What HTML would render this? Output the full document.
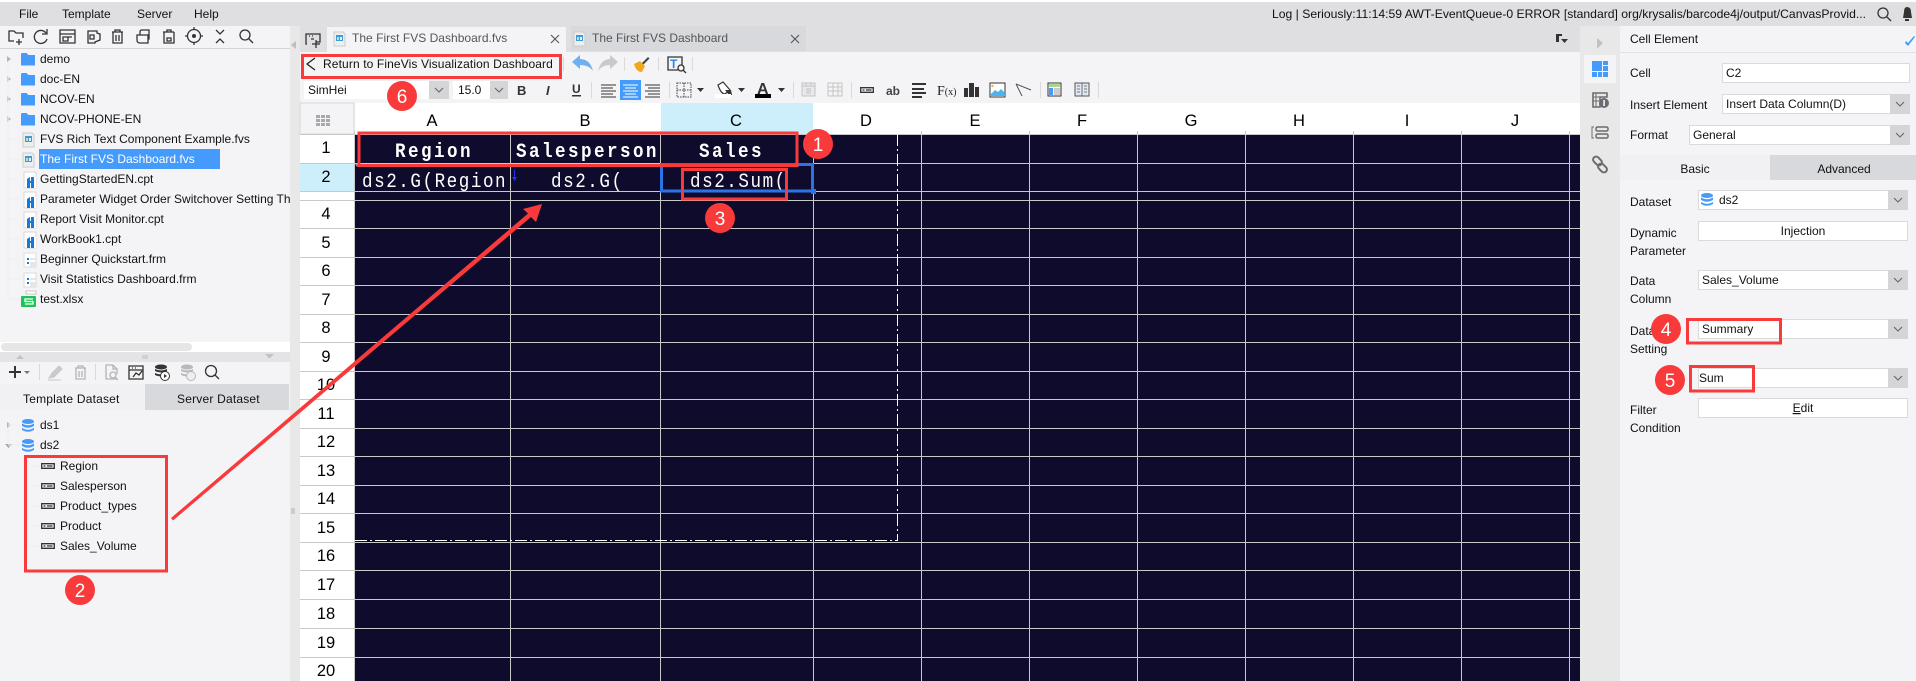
<!DOCTYPE html>
<html><head><meta charset="utf-8"><title>FineReport</title>
<style>
html,body{margin:0;padding:0;background:#fff;width:1916px;height:681px;overflow:hidden}
svg{display:block}
text{font-family:"Liberation Sans","Noto Sans CJK SC",sans-serif;font-size:12px;fill:#111}
.h{font-size:16.500px;fill:#000;text-anchor:middle}
.m{font-family:"Liberation Mono",monospace;font-size:20px;fill:#fff;letter-spacing:1.750px}
.b{font-family:"Liberation Mono",monospace;font-size:20px;fill:#fff;font-weight:bold;letter-spacing:2.770px}
.c{font-size:19px;fill:#fff;text-anchor:middle}
.g{fill:#555}
.s{fill:none;stroke:#333;stroke-width:1.3}
.l{fill:none;stroke:#b4b4b4;stroke-width:1.3}
.sep{fill:#d9d9db}
.car{fill:#333}
.box{fill:none;stroke:#f93a3a;stroke-width:3}
</style></head><body>
<svg width="1916" height="681" viewBox="0 0 1916 681" xmlns="http://www.w3.org/2000/svg">
<defs>
<g id="folder"><path d="M0 1.5q0-1.500 1.500-1.500h4l2 2h6.500v10.500h-14z" fill="#459bfb"/></g>
<g id="fvs"><path d="M0 0h9l2 2v12H0z" fill="#eceef0" stroke="#ccc"/><rect x="2" y="3" width="7" height="6" fill="#3f9bd8"/><rect x="3" y="5" width="2" height="3" fill="#bfe3b0"/><rect x="6" y="5" width="2" height="3" fill="#e8f3ff"/></g>
<g id="cpt"><path d="M0 0h12v16H0z" fill="#fff" stroke="#cfcfcf" stroke-width=".8"/><path d="M2.500 5h9.500v11H2.500z" fill="#fff"/><path d="M3 7l3-2v11H3zM7 5h3v11H7V11H6V9h1z" fill="#1878d8"/></g>
<g id="frm"><path d="M0 0h12v14H0z" fill="#fff" stroke="#d5d5d5" stroke-width=".8"/><rect x="3" y="5" width="2" height="2" fill="#1878d8"/><rect x="3" y="9" width="2" height="2" fill="#1878d8"/><rect x="6" y="5" width="7" height="2" fill="#e6e6e6"/><rect x="6" y="9" width="7" height="5" fill="#e6e6e6"/></g>
<g id="db"><ellipse cx="6" cy="2.500" rx="6" ry="2.500" fill="#459bfb"/><path d="M0 4.500q6 3.500 12 0v2.500q-6 3.500-12 0zM0 9q6 3.500 12 0v2q-6 3.500-12 0z" fill="#459bfb"/></g>
<g id="field"><path d="M.7.700h12.600v4.600H.7z" fill="none" stroke="#333" stroke-width="1.300"/><path d="M2.500 3h2M6 3h5.500" stroke="#333" stroke-width="1.200"/></g>
<g id="ch"><path d="M-4-2L0 2L4-2" fill="none" stroke="#666" stroke-width="1.100"/></g>
<clipPath id="cl1"><rect x="38" y="185" width="252" height="30"/></clipPath>
<clipPath id="cl2"><rect x="300" y="131" width="1280" height="550"/></clipPath>
</defs>

<!-- backgrounds -->
<rect width="1916" height="681" fill="#f4f4f6"/>
<rect width="1916" height="2" fill="#fff"/>
<rect y="2" width="1916" height="24" fill="#dfdfe1"/>
<rect x="0" y="26" width="290" height="655" fill="#f4f4f6"/>
<rect x="290" y="26" width="10" height="655" fill="#e8e8e8"/>
<rect x="300" y="26" width="1280" height="26" fill="#dfdfe1"/>
<rect x="300" y="52" width="1280" height="51" fill="#f4f4f6"/>
<rect x="1580" y="26" width="40" height="655" fill="#e8e8e8"/>
<path d="M296 41l-5 4 5 4z" fill="#bdbdbd"/>
<path d="M292 508v6M294 508v6" stroke="#b0b0b0"/>

<!-- menu -->
<text x="19" y="18">File</text><text x="62" y="18">Template</text><text x="137" y="18">Server</text><text x="194" y="18">Help</text>
<text x="1866" y="18" text-anchor="end" textLength="594" lengthAdjust="spacingAndGlyphs">Log | Seriously:11:14:59 AWT-EventQueue-0 ERROR [standard] org/krysalis/barcode4j/output/CanvasProvid...</text>
<circle cx="1883" cy="13" r="5" class="s"/><path d="M1887 17l4 4" class="s"/>
<path d="M1907 7q-3 0-3 5l-1 6h9l-1-6q0-5-4-5zM1905 19h4v2h-4z" fill="#333"/>

<!-- left toolbar -->
<rect y="48" width="290" height="1" fill="#d4d4d6"/>
<g class="s">
<path d="M14 41H9V31h5l2 2h7v5M19 39v6M16 42h6"/>
<path d="M46 33a6.500 6.500 0 1 0 1 6M47 29v5h-5"/>
<path d="M60 30h15v13H60zM60 34h15M63 37h5v4h-5zM68 37h4"/>
<path d="M88 31h9v2l3 1v6l-5 2v1h-7zM90 35h4v4h-4z"/>
<path d="M112 32h11M115 32v-2h5v2M113 32v11h9V32M116 35v6M119 35v6"/>
<path d="M137 35h11v8h-8q-3 0-3-3zM140 35v-3q0-2 2-2h7v9h-1"/>
<path d="M163 32h11M167 32v-2h4v2M164 32v11h10V32M167 38h4v3h-4z"/>
<circle cx="194" cy="36" r="6.500"/>
<path d="M216 30l4 4 4-4M216 43l4-4 4 4"/>
<circle cx="245" cy="35" r="5"/><path d="M249 39l4 4"/>
</g>
<circle cx="194" cy="36" r="2" fill="#333"/>
<path d="M194 27v3M194 42v3M185 36h3M200 36h3" class="s"/>

<!-- tree 1 -->
<path d="M7 56l4 3-4 3zM7 76l4 3-4 3zM7 96l4 3-4 3zM7 116l4 3-4 3z" fill="#b5b5b5"/>
<path d="M8 139h12M8 159h12M8 179h12M8 199h12M8 219h12M8 239h12M8 259h12M8 279h12M8 299h12M8 62v237" stroke="#eeeef0" fill="none"/>
<use href="#folder" x="21" y="53"/><use href="#folder" x="21" y="73"/><use href="#folder" x="21" y="93"/><use href="#folder" x="21" y="113"/>
<use href="#fvs" x="23" y="133"/><use href="#fvs" x="23" y="153"/>
<use href="#cpt" x="24" y="172"/><use href="#cpt" x="24" y="192"/><use href="#cpt" x="24" y="212"/><use href="#cpt" x="24" y="232"/>
<use href="#frm" x="24" y="253"/><use href="#frm" x="24" y="273"/>
<path d="M26 291h10v3H26z" fill="#fff" stroke="#bbb" stroke-width=".8"/>
<rect x="21" y="296" width="15" height="11" rx="1" fill="#1fc25a"/><path d="M33 299h-8v2.500h8v2.500h-8" stroke="#fff" stroke-width="1.300" fill="none"/>
<rect x="39" y="149" width="181" height="20" fill="#459bfb"/>
<text x="40" y="63">demo</text><text x="40" y="83">doc-EN</text><text x="40" y="103">NCOV-EN</text><text x="40" y="123">NCOV-PHONE-EN</text>
<text x="40" y="143">FVS Rich Text Component Example.fvs</text>
<text x="40" y="163" style="fill:#fff">The First FVS Dashboard.fvs</text>
<text x="40" y="183">GettingStartedEN.cpt</text>
<text x="40" y="203" clip-path="url(#cl1)">Parameter Widget Order Switchover Setting Three.cpt</text>
<text x="40" y="223">Report Visit Monitor.cpt</text>
<text x="40" y="243">WorkBook1.cpt</text>
<text x="40" y="263">Beginner Quickstart.frm</text>
<text x="40" y="283">Visit Statistics Dashboard.frm</text>
<text x="40" y="303">test.xlsx</text>

<!-- scrollbar & divider -->
<rect x="0" y="342" width="290" height="10" fill="#fff"/>
<rect x="1" y="343" width="191" height="8" rx="4" fill="#e6e6e6"/>
<rect x="0" y="352" width="290" height="10" fill="#e4e4e6"/>
<path d="M16 359l4-4 4 4zM265 354h9l-4.500 4.500z" fill="#c2c2c2"/>
<path d="M142 356h6M142 358h6" stroke="#bbb"/>

<!-- lower toolbar -->
<path d="M9 372h12M15 366v12" stroke="#333" stroke-width="2" fill="none"/>
<path d="M24 371h6l-3 3z" fill="#777"/>
<rect x="39" y="364" width="1" height="16" class="sep"/><rect x="95" y="364" width="1" height="16" class="sep"/>
<path d="M49 378l3-5 7-7 3 3-8 8zM48 380h13" fill="#c9c9c9" stroke="#c9c9c9"/>
<path class="l" d="M75 368h11M78 368v-2h5v2M76 368v11h9v-11M79 371v6M82 371v6"/>
<path class="l" d="M117 379h-11v-14h7l4 4v5M113 365v4h4"/><circle cx="113" cy="375" r="3" class="l"/><path class="l" d="M115 377l3 3"/>
<path class="s" d="M143 379h-14v-13h14zM129 370h14M132 368h1M135 368h1M133 377l3-4 3 2 3-4"/>
<ellipse cx="161" cy="367" rx="6" ry="2.500" fill="#333"/><path d="M155 369q6 3 12 0v2q-6 3-12 0zM155 373q6 3 12 0v2q-6 3-12 0z" fill="#333"/><circle cx="165" cy="376" r="4.500" fill="#fff" stroke="#333"/><path d="M164 374l3 2-3 2z" fill="#333"/>
<ellipse cx="187" cy="367" rx="6" ry="2.500" fill="#b8b8b8"/><path d="M181 369q6 3 12 0v2q-6 3-12 0zM181 373q6 3 12 0v2q-6 3-12 0z" fill="#b8b8b8"/><circle cx="191" cy="376" r="4.500" fill="#eee" stroke="#b8b8b8"/>
<circle cx="211" cy="371" r="5.500" class="s"/><path d="M215 375l4 4" class="s"/>

<!-- dataset tabs -->
<rect x="0" y="384" width="145" height="26" fill="#f1f1f3"/>
<rect x="145" y="384" width="144" height="26" fill="#d8d9dc"/>
<text x="23" y="403" style="letter-spacing:.2px">Template Dataset</text>
<text x="177" y="403" style="letter-spacing:.2px">Server Dataset</text>
<path d="M7 422l4 3-4 3z" fill="#b5b5b5"/><path d="M5 444h7l-3.500 4z" fill="#a5a5a5"/>
<path d="M8 428v15M8 425h12M8 445h12M28 451v96M28 466h12M28 486h12M28 506h12M28 526h12M28 546h12" stroke="#eeeef0" fill="none"/>
<use href="#db" x="22" y="419"/><use href="#db" x="22" y="439"/>
<text x="40" y="429">ds1</text><text x="40" y="449">ds2</text>
<use href="#field" x="41" y="463"/><use href="#field" x="41" y="483"/><use href="#field" x="41" y="503"/><use href="#field" x="41" y="523"/><use href="#field" x="41" y="543"/>
<text x="60" y="470">Region</text><text x="60" y="490">Salesperson</text><text x="60" y="510">Product_types</text><text x="60" y="530">Product</text><text x="60" y="550">Sales_Volume</text>

<!-- doc tabs -->
<rect x="327" y="27" width="239" height="25" fill="#f4f4f6"/>
<rect x="571" y="26" width="235" height="25" fill="#d8d9dc"/>
<path class="s" d="M307 44h-1V34h14v8h-4M311 39h3M309 36h1M312 36h1"/><path class="s" d="M316 40v8M312 44h8"/>
<use href="#fvs" x="334" y="32"/><use href="#fvs" x="574" y="32"/>
<text x="352" y="42" class="g" style="letter-spacing:.02px">The First FVS Dashboard.fvs</text>
<text x="592" y="42" class="g">The First FVS Dashboard</text>
<path d="M551 35l8 8M559 35l-8 8M791 35l8 8M799 35l-8 8" stroke="#555" stroke-width="1.100"/>
<path d="M1556 34h6v2h-3v6h-3zM1561 39h7l-3.500 4z" fill="#333"/>

<!-- toolbar row 1 -->
<path d="M315 58l-8 6 8 6" fill="none" stroke="#222" stroke-width="1.300"/>
<text x="323" y="68" style="letter-spacing:.12px">Return to FineVis Visualization Dashboard</text>
<rect x="563" y="57" width="1" height="14" class="sep"/><rect x="624" y="57" width="1" height="14" class="sep"/><rect x="658" y="57" width="1" height="14" class="sep"/><rect x="692" y="57" width="1" height="14" class="sep"/>
<path d="M572 62l8-7v4q10 0 13 12q-4-6-13-6v4z" fill="#6fb0f0"/>
<path d="M618 62l-8-7v4q-9 0-12 12q4-6 12-6v4z" fill="#c9c9c9"/>
<path d="M634 64l6-3 5 5-3 6q-6 0-8-8z" fill="#f2a81c"/><path d="M642 63l6-6 1.500 1.500-6 6z" fill="#444"/>
<path class="s" d="M678 70h-10V57h14v8"/><text x="670" y="68" style="font-size:12px;font-weight:bold;fill:#2f84e0">T</text><circle cx="681" cy="68" r="3" class="s"/><path class="s" d="M683 70l3 3"/>

<!-- toolbar row 2 -->
<rect x="304" y="81" width="125" height="18" fill="#fff"/><rect x="429" y="81" width="20" height="18" fill="#d5d5d8"/>
<rect x="453" y="81" width="37" height="18" fill="#fff"/><rect x="490" y="81" width="18" height="18" fill="#d5d5d8"/>
<text x="308" y="94">SimHei</text><text x="458" y="94">15.0</text>
<use href="#ch" x="439" y="90"/><use href="#ch" x="499" y="90"/>
<text x="517" y="95" style="font-weight:bold;font-size:13px;fill:#333">B</text>
<text x="546" y="95" style="font-style:italic;font-weight:bold;font-size:13px;fill:#333">I</text>
<text x="572" y="93" style="font-weight:bold;font-size:12px;fill:#333">U</text><rect x="572" y="95" width="9" height="1.500" fill="#333"/>
<rect x="591" y="82" width="1" height="16" class="sep"/>
<path d="M601 85h15M601 88h12M601 91h15M601 94h12M601 97h15" stroke="#333"/>
<rect x="620" y="80" width="21" height="20" fill="#459bfb"/>
<path d="M623 85h15M625 88h11M623 91h15M625 94h11M623 97h15" stroke="#fff"/>
<path d="M645 85h15M648 88h12M645 91h15M648 94h12M645 97h15" stroke="#333"/>
<rect x="669" y="82" width="1" height="16" class="sep"/>
<path d="M677 83h14v14h-14zM684 83v14M677 90h14" fill="none" stroke="#444" stroke-dasharray="1.500 1"/>
<path d="M697 88h7l-3.500 4z" class="car"/>
<path d="M718 85l5-3 7 8-5 4q-4 0-7-9z" fill="#fff" stroke="#333" stroke-width="1.200"/><path d="M725 90l6 0 1 5h-3z" fill="#333"/><rect x="715" y="94" width="16" height="4" fill="#fff"/>
<path d="M738 88h7l-3.500 4z" class="car"/>
<text x="757" y="94" style="font-size:16px;font-weight:bold;fill:#333">A</text><rect x="755" y="94" width="16" height="4" fill="#000"/>
<path d="M778 88h7l-3.500 4z" class="car"/>
<rect x="793" y="82" width="1" height="16" class="sep"/>
<path d="M802 83h13v13h-13zM802 86h13M806 83v3M811 83v3" fill="#e9e9eb" stroke="#c4c4c4"/><rect x="806" y="88" width="5" height="6" fill="#d5d5d5"/>
<path d="M828 83h14v13h-14zM828 87h14M828 91h14M833 83v13M838 83v13" fill="none" stroke="#c4c4c4"/>
<rect x="851" y="82" width="1" height="16" class="sep"/>
<use href="#field" x="860" y="87"/>
<text x="886" y="95" style="font-size:12px;font-weight:bold;fill:#444">ab</text>
<rect x="912" y="83" width="14" height="2" fill="#333"/><rect x="912" y="88" width="12" height="2" fill="#333"/><rect x="912" y="92" width="14" height="2" fill="#333"/><rect x="912" y="96" width="10" height="2" fill="#333"/>
<text x="937" y="95" style="font-family:'Liberation Serif',serif;font-size:14px;fill:#222">F<tspan style="font-size:10px">(x)</tspan></text>
<path d="M964 88h4v9h-4zM969 83h5v14h-5zM975 87h4v10h-4z" fill="#333"/>
<rect x="990" y="83" width="15" height="14" fill="#fff" stroke="#333"/><path d="M990 95l5-5 3 2 3-3 4 4v3h-15z" fill="#4ab3f0"/><circle cx="992.500" cy="86" r="1.200" fill="#f2b24a"/>
<path d="M1016 84l15 6M1016 84l6 12" fill="none" stroke="#555"/>
<rect x="1040" y="82" width="1" height="16" class="sep"/>
<rect x="1048" y="83" width="13" height="13" fill="#fff" stroke="#333"/><rect x="1049" y="84" width="11" height="3" fill="#a7d88a"/><rect x="1049" y="88" width="4" height="7" fill="#459bfb"/><rect x="1054" y="88" width="6" height="7" fill="#ccc"/>
<rect x="1075" y="83" width="14" height="13" fill="#e3e9f3" stroke="#555"/><path d="M1082 83v13M1077 86h3M1077 89h3M1077 92h3M1084 86h3M1084 89h3M1084 92h3" stroke="#555" stroke-width=".8"/>
<rect x="1098" y="82" width="1" height="16" class="sep"/>

<!-- grid -->
<rect x="355" y="134" width="1225" height="547" fill="#0f0b2c"/>
<rect x="300" y="103" width="54" height="31" fill="#f4f4f6" stroke="#d8d8d8"/>
<rect x="355" y="103" width="1225" height="31" fill="#fff"/>
<rect x="661" y="103" width="152" height="31" fill="#cdeffb"/>
<rect x="300" y="134" width="55" height="547" fill="#fff"/>
<rect x="300" y="163" width="55" height="28" fill="#cdeffb"/>
<path d="M316 116h4v3h-4zM321 116h4v3h-4zM326 116h4v3h-4zM316 120h4v3h-4zM321 120h4v3h-4zM326 120h4v3h-4zM316 124h4v3h-4zM321 124h4v3h-4zM326 124h4v3h-4z" fill="#a9a9a9" transform="translate(0 -1)"/>
<g stroke="#c9c9c9" fill="none" clip-path="url(#cl2)">
<path d="M300 134.500H1580M300 163.500H1580M300 191.500H1580M300 200.500H1580M300 228.500H1580M300 257.500H1580M300 285.500H1580M300 314.500H1580M300 342.500H1580M300 371.500H1580M300 399.500H1580M300 428.500H1580M300 456.500H1580M300 485.500H1580M300 513.500H1580M300 542.500H1580M300 570.500H1580M300 599.500H1580M300 628.500H1580M300 657.500H1580"/>
<path d="M354.500 103V681M510.500 103V681M660.500 103V681M813.500 103V681M921.500 103V681M1029.500 103V681M1137.500 103V681M1245.500 103V681M1353.500 103V681M1461.500 103V681M1569.500 103V681"/>
</g>
<text class="h" x="432" y="126">A</text><text class="h" x="585" y="126">B</text><text class="h" x="736" y="126">C</text><text class="h" x="866" y="126">D</text><text class="h" x="975" y="126">E</text><text class="h" x="1082" y="126">F</text><text class="h" x="1191" y="126">G</text><text class="h" x="1299" y="126">H</text><text class="h" x="1407" y="126">I</text><text class="h" x="1515" y="126">J</text>
<text class="h" x="326" y="153">1</text><text class="h" x="326" y="182">2</text>
<text class="h" x="326" y="219">4</text><text class="h" x="326" y="248">5</text><text class="h" x="326" y="276">6</text><text class="h" x="326" y="305">7</text><text class="h" x="326" y="333">8</text><text class="h" x="326" y="362">9</text><text class="h" x="326" y="390">10</text><text class="h" x="326" y="419">11</text><text class="h" x="326" y="447">12</text><text class="h" x="326" y="476">13</text><text class="h" x="326" y="504">14</text><text class="h" x="326" y="533">15</text><text class="h" x="326" y="561">16</text><text class="h" x="326" y="590">17</text><text class="h" x="326" y="619">18</text><text class="h" x="326" y="648">19</text><text class="h" x="326" y="676">20</text>

<text class="b" transform="translate(395 157) scale(.88 1)">Region</text>
<text class="b" transform="translate(516 157) scale(.88 1)">Salesperson</text>
<text class="b" transform="translate(699 157) scale(.88 1)">Sales</text>
<text class="m" transform="translate(362 187) scale(.88 1)">ds2.G(Region</text>
<text class="m" transform="translate(551 187) scale(.88 1)">ds2.G(</text>
<text class="m" transform="translate(690 187) scale(.88 1)">ds2.Sum(</text>
<path d="M514.500 170v9" stroke="#2233ee"/><path d="M512 177h5l-2.500 4z" fill="#2233ee"/>
<path d="M355 164h4l-2 3zM511 164h4l-2 3z" fill="#888"/>

<path d="M897.500 134V541" stroke="#fff" stroke-dasharray="12 3 2 3" fill="none"/>
<path d="M355 540.500H897" stroke="#fff" stroke-dasharray="12 3 2 3" fill="none"/>

<!-- selection -->
<rect x="661.500" y="164.500" width="151" height="26.500" fill="none" stroke="#2d73e6" stroke-width="3"/>
<rect x="811" y="189" width="5" height="5" fill="#2d73e6"/>

<!-- right rail -->
<path d="M1597 38l6 5-6 6z" fill="#c2c2c2"/>
<rect x="1584" y="55" width="32" height="28" fill="#f4f4f6"/>
<path d="M1592 61h10v10h-10zM1603 61h5v4h-5zM1603 66h5v5h-5zM1592 72h5v5h-5zM1598 72h4v5h-4zM1603 72h5v5h-5z" fill="#459bfb"/>
<path d="M1593 93h14v4h-7v10h-7z" fill="none" stroke="#6b6b70" stroke-width="1.600"/><path d="M1596 93v14M1593 97h7M1593 101h6" stroke="#6b6b70" fill="none"/><circle cx="1604" cy="103" r="5" fill="#6b6b70"/><rect x="1603.300" y="100" width="1.500" height="6" fill="#fff"/>
<path d="M1594 127h-2v11h2" fill="none" stroke="#6b6b70"/><rect x="1596" y="127" width="12" height="4" rx="1.500" fill="none" stroke="#6b6b70" stroke-width="1.500"/><rect x="1596" y="134" width="12" height="4" rx="1.500" fill="none" stroke="#6b6b70" stroke-width="1.500"/>
<rect x="1592.500" y="158" width="10" height="6" rx="3" transform="rotate(45 1597.500 161)" fill="none" stroke="#6b6b70" stroke-width="2"/><rect x="1597.500" y="165" width="10" height="6" rx="3" transform="rotate(45 1602.500 168)" fill="none" stroke="#6b6b70" stroke-width="2"/>

<!-- right panel -->
<text x="1630" y="43">Cell Element</text>
<rect x="1620" y="52" width="296" height="1" fill="#e2e2e4"/>
<path d="M1905 43l3 3 7-9-1-1-6 7-2-2z" fill="#459bfb"/>
<g fill="#fff" stroke="#dadadc">
<rect x="1722.500" y="63.500" width="187" height="19"/>
<rect x="1722.500" y="94.500" width="187" height="19"/>
<rect x="1689.500" y="125.500" width="220" height="19"/>
<rect x="1698.500" y="190.500" width="209" height="19"/>
<rect x="1698.500" y="221.500" width="209" height="19"/>
<rect x="1698.500" y="270.500" width="209" height="19"/>
<rect x="1698.500" y="319.500" width="209" height="19"/>
<rect x="1698.500" y="368.500" width="209" height="19"/>
<rect x="1698.500" y="398.500" width="209" height="19"/>
</g>
<g fill="#d5d5d8">
<rect x="1890" y="94" width="20" height="20"/><rect x="1890" y="125" width="20" height="20"/>
<rect x="1888" y="190" width="20" height="20"/><rect x="1888" y="270" width="20" height="20"/><rect x="1888" y="319" width="20" height="20"/><rect x="1888" y="368" width="20" height="20"/>
</g>
<use href="#ch" x="1900" y="104"/><use href="#ch" x="1900" y="135"/><use href="#ch" x="1898" y="200"/><use href="#ch" x="1898" y="280"/><use href="#ch" x="1898" y="329"/><use href="#ch" x="1898" y="378"/>
<text x="1630" y="77">Cell</text><text x="1726" y="77">C2</text>
<text x="1630" y="109">Insert Element</text><text x="1726" y="108">Insert Data Column(D)</text>
<text x="1630" y="139">Format</text><text x="1693" y="139">General</text>
<rect x="1620" y="155" width="150" height="25" fill="#f1f1f3"/><rect x="1770" y="155" width="146" height="25" fill="#d8d9dc"/>
<text x="1695" y="173" text-anchor="middle">Basic</text><text x="1844" y="173" text-anchor="middle">Advanced</text>
<text x="1630" y="206">Dataset</text><use href="#db" x="1701" y="193"/><text x="1719" y="204">ds2</text>
<text x="1630" y="237">Dynamic</text><text x="1630" y="255">Parameter</text><text x="1803" y="235" text-anchor="middle">Injection</text>
<text x="1630" y="285">Data</text><text x="1630" y="303">Column</text><text x="1702" y="284">Sales_Volume</text>
<text x="1630" y="335">Data</text><text x="1630" y="353">Setting</text><text x="1702" y="333">Summary</text>
<text x="1699" y="382">Sum</text>
<text x="1630" y="414">Filter</text><text x="1630" y="432">Condition</text><text x="1803" y="412" text-anchor="middle"><tspan text-decoration="underline">E</tspan>dit</text>

<!-- annotations -->
<polygon points="171,518 528,213.500 523,209 542,204 536,222 531,217 173,520.500" fill="#f93a3a"/>
<rect x="302.500" y="55.500" width="258" height="22" class="box"/>
<rect x="359" y="133" width="438" height="32.500" class="box"/>
<rect x="682.500" y="169.500" width="104" height="29.500" class="box"/>
<rect x="25.500" y="456.500" width="141" height="114.500" class="box"/>
<rect x="1687.500" y="319.500" width="93" height="23.500" class="box"/>
<rect x="1690.500" y="366.500" width="63" height="24.500" class="box"/>
<g fill="#f93a3a"><circle cx="818" cy="144" r="15"/><circle cx="80" cy="590" r="15"/><circle cx="720" cy="218" r="15"/><circle cx="1666" cy="329" r="15"/><circle cx="1670" cy="380" r="15"/><circle cx="402" cy="96" r="15"/></g>
<text class="c" x="818" y="151">1</text><text class="c" x="80" y="597">2</text><text class="c" x="720" y="225">3</text><text class="c" x="1666" y="336">4</text><text class="c" x="1670" y="387">5</text><text class="c" x="402" y="103">6</text>
</svg>
</body></html>
